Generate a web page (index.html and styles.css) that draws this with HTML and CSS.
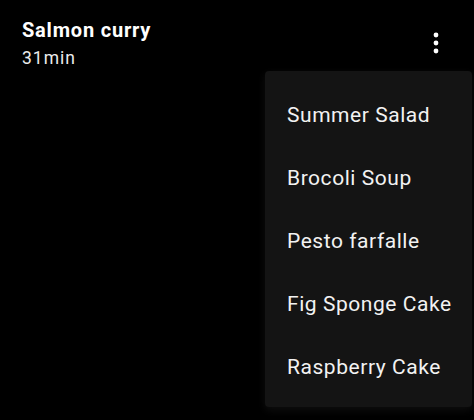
FILE: index.html
```html
<!DOCTYPE html>
<html>
<head>
<meta charset="utf-8">
<link rel="stylesheet" href="styles.css">
</head>
<body>
<div class="screen">
  <header class="tile">
    <div class="texts">
      <div class="title">Salmon curry</div>
      <div class="subtitle">31min</div>
    </div>
    <button class="more" aria-label="More">
      <svg width="6" height="22" viewBox="0 0 6 22"><circle cx="3" cy="3" r="2.4" fill="#fff"/><circle cx="3" cy="11" r="2.4" fill="#fff"/><circle cx="3" cy="19" r="2.4" fill="#fff"/></svg>
    </button>
  </header>
  <ul class="menu">
    <li>Summer Salad</li>
    <li>Brocoli Soup</li>
    <li>Pesto farfalle</li>
    <li>Fig Sponge Cake</li>
    <li>Raspberry Cake</li>
  </ul>
</div>
</body>
</html>
```
FILE: styles.css
```css
html, body {
  margin: 0;
  padding: 0;
  background: #000;
}
.screen {
  position: relative;
  width: 474px;
  height: 420px;
  background: #000;
  font-family: Roboto, "Noto Sans", sans-serif;
  color: #fff;
  overflow: hidden;
}
.tile {
  display: flex;
  align-items: flex-start;
  justify-content: space-between;
  padding: 17px 26px 0 22px;
}
.title {
  font-weight: 700;
  font-size: 20px;
  line-height: 26px;
  letter-spacing: 0.8px;
}
.subtitle {
  font-size: 17.5px;
  line-height: 24px;
  margin-top: 2.5px;
  letter-spacing: 1px;
  color: #ececec;
}
.more {
  background: none;
  border: 0;
  padding: 0;
  margin-top: 15px;
  margin-right: 9px;
  display: flex;
}
.menu {
  position: absolute;
  left: 265px;
  top: 71px;
  width: 207px;
  margin: 0;
  padding: 12px 0 9px;
  list-style: none;
  background: #141414;
  border-radius: 4px;
  box-shadow: 0 3px 8px rgba(255,255,255,0.06);
}
.menu li {
  height: 63px;
  display: flex;
  align-items: center;
  padding: 0 0 0 22px;
  white-space: nowrap;
  font-size: 21px;
  color: #f2f2f2;
  letter-spacing: 0.55px;
}
```
